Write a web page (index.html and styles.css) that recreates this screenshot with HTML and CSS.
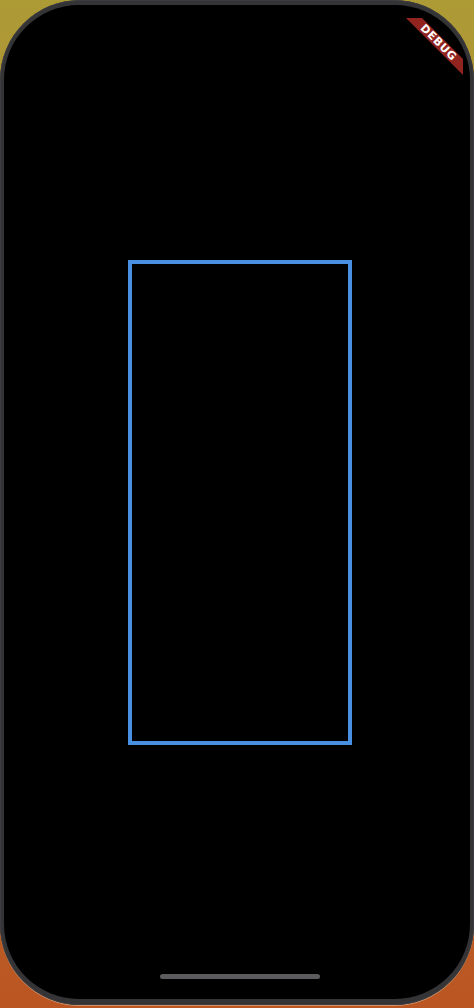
FILE: index.html
```html
<!DOCTYPE html>
<html lang="en">
<head>
<meta charset="utf-8">
<title>Preview</title>
<link rel="stylesheet" href="styles.css">
</head>
<body>
  <div class="device">
    <div class="screen">
      <div class="frame-rect"></div>
      <div class="home-indicator"></div>
      <svg class="debug-banner" width="57" height="57" viewBox="0 0 57 57" aria-label="DEBUG">
        <polygon points="0,0 16,0 57,41 57,57" fill="#92241f"/>
        <text x="0" y="0" transform="translate(32.5 24.5) rotate(45)" text-anchor="middle" dominant-baseline="central" class="debug-text">DEBUG</text>
      </svg>
    </div>
  </div>
</body>
</html>
```

FILE: styles.css
```css
html, body {
  margin: 0;
  padding: 0;
}

body {
  width: 474px;
  height: 1008px;
  overflow: hidden;
  background: linear-gradient(180deg, #ad9b36 0%, #b07a2c 50%, #bb5522 100%);
  font-family: "Liberation Sans", Arial, sans-serif;
}

.device {
  width: 474px;
  height: 1005px;
  box-sizing: border-box;
  padding: 5px 4px 6px 4px;
  border-radius: 80px;
  background: #343436;
  box-shadow: 0 1px 0 rgba(214, 170, 130, 0.75), inset 0 0 0 1px #3c3c40;
}

.screen {
  position: relative;
  height: 100%;
  box-sizing: border-box;
  border-radius: 75px;
  background: #000;
  display: flex;
  flex-direction: column;
  align-items: center;
  padding-top: 255px;
  padding-left: 6px;
  overflow: hidden;
}

.frame-rect {
  width: 224px;
  height: 485px;
  box-sizing: border-box;
  border: 4px solid #4a90e2;
}

.home-indicator {
  margin-top: auto;
  margin-bottom: 20px;
  width: 160px;
  height: 5px;
  border-radius: 3px;
  background: #5c5c5e;
}

.debug-banner {
  position: absolute;
  top: 13px;
  right: 7px;
}

.debug-text {
  fill: #fff;
  font-family: "DejaVu Sans", "Liberation Sans", sans-serif;
  font-weight: 700;
  font-size: 11px;
  letter-spacing: 0.6px;
}
```
